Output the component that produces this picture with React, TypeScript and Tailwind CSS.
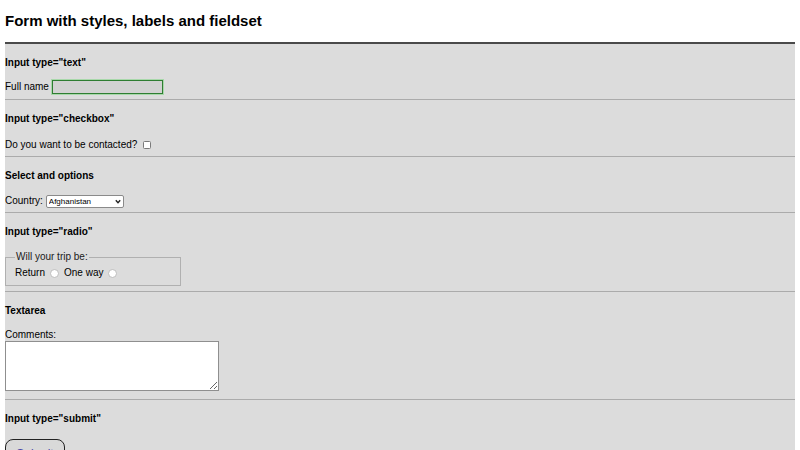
import React from 'react';

const font = "font-['Liberation_Sans',Arial,Helvetica,sans-serif]";

const Heading: React.FC<{ children: React.ReactNode }> = ({ children }) => (
  <h4 className="text-[10px] font-bold leading-[12px] text-black">{children}</h4>
);

const Radio: React.FC<{ name: string; id: string }> = ({ name, id }) => (
  <input
    id={id}
    type="radio"
    name={name}
    className="appearance-none w-[9px] h-[9px] min-w-[9px] rounded-full bg-white border border-[#bdbdbd] mx-[5px] shrink-0"
  />
);

export default function App() {
  return (
    <div className={`${font} bg-white min-h-[450px] px-[5px] text-black`}>
      <h2 className="text-[15px] font-bold leading-[17px] pt-[12px] pb-[13px]">
        Form with styles, labels and fieldset
      </h2>

      <form className="bg-[#dcdcdc] border-t-2 border-[#4a4a4a] text-[10px] leading-[12px]">
        {/* text input */}
        <section className="border-b border-[#ababab] pt-[13px] pb-[5px]">
          <Heading>Input type="text"</Heading>
          <div className="mt-[11px] h-[14px] flex items-center">
            <label htmlFor="fullname">Full name</label>
            <input
              id="fullname"
              type="text"
              className="ml-[3px] w-[111px] h-[14px] bg-[#d2d2d2] border border-[#2f7d32] shadow-[0_0_0_1px_#a8d8aa] outline-none"
            />
          </div>
        </section>

        {/* checkbox */}
        <section className="border-b border-[#ababab] pt-[13px] pb-[4px]">
          <Heading>Input type="checkbox"</Heading>
          <div className="mt-[13px] h-[14px] flex items-center">
            <label htmlFor="contact">Do you want to be contacted?</label>
            <input
              id="contact"
              type="checkbox"
              className="appearance-none ml-[6px] w-[8px] h-[8px] rounded-[1.5px] bg-white border border-[#7a7a7a]"
            />
          </div>
        </section>

        {/* select */}
        <section className="border-b border-[#ababab] pt-[13px] pb-[4px]">
          <Heading>Select and options</Heading>
          <div className="mt-[12px] h-[14px] flex items-center">
            <label htmlFor="country">Country:</label>
            <div className="relative ml-[3px]">
              <select
                id="country"
                className="appearance-none block w-[78px] h-[13px] bg-white border border-[#8a8a8a] rounded-[2px] pl-[2px] text-[8px] leading-[11px] outline-none"
              >
                <option>Afghanistan</option>
              </select>
              <svg
                className="absolute right-[3px] top-[4px] pointer-events-none"
                width="6"
                height="5"
                viewBox="0 0 6 5"
              >
                <path d="M0.8 1.2 L3 3.6 L5.2 1.2" fill="none" stroke="#222" strokeWidth="1.4" />
              </svg>
            </div>
          </div>
        </section>

        {/* radio */}
        <section className="border-b border-[#ababab] pt-[13px] pb-[5px]">
          <Heading>Input type="radio"</Heading>
          <fieldset className="mt-[13px] w-[176px] border border-[#b0b0b0] pl-[9px] pb-[5px]">
            <legend className="px-[1px] text-[#1a1a1a]">Will your trip be:</legend>
            <div className="mt-[3px] h-[14px] flex items-center">
              <label htmlFor="ret">Return</label>
              <Radio name="trip" id="ret" />
              <label htmlFor="one">One way</label>
              <Radio name="trip" id="one" />
            </div>
          </fieldset>
        </section>

        {/* textarea */}
        <section className="border-b border-[#ababab] pt-[13px] pb-[8px]">
          <Heading>Textarea</Heading>
          <label htmlFor="comments" className="block mt-[12px]">Comments:</label>
          <textarea
            id="comments"
            className="block w-[214px] h-[50px] bg-white border border-[#8f8f8f] outline-none"
          />
        </section>

        {/* submit */}
        <section className="pt-[13px] pb-[10px]">
          <Heading>Input type="submit"</Heading>
          <button
            type="submit"
            className="mt-[14px] w-[60px] h-[30px] border-[1.5px] border-[#222] rounded-[8px] bg-[#d9d9d9] text-[#4b47a8] text-[12px]"
          >
            Submit
          </button>
        </section>
      </form>
    </div>
  );
}
